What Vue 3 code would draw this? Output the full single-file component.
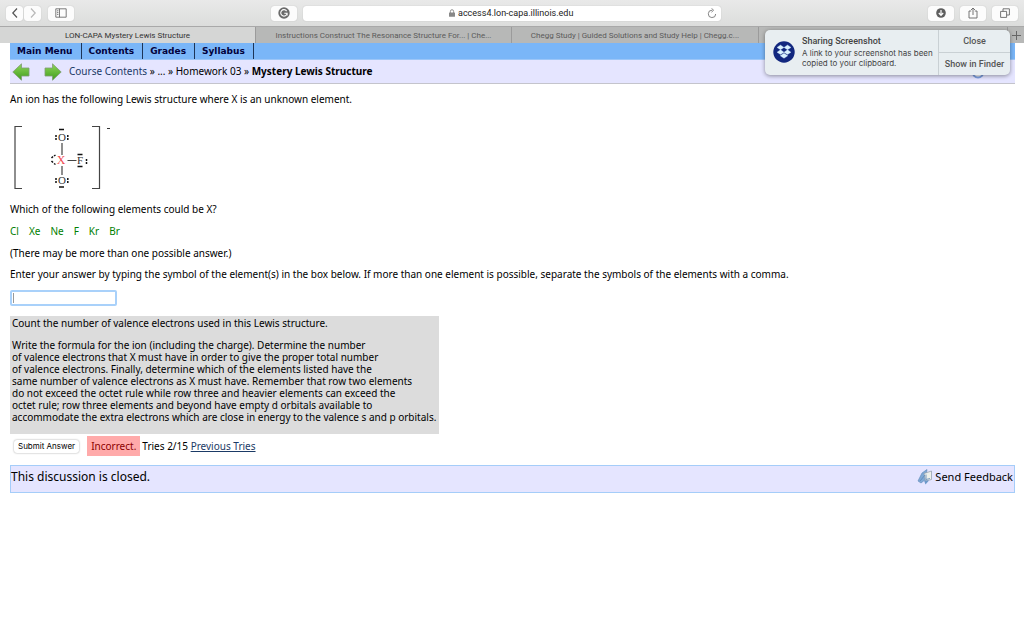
<template>
  <div class="browser">
    <header class="toolbar">
      <div class="side">
        <div class="pair">
          <button class="tool small" aria-label="Back">
            <svg width="8" height="12" viewBox="0 0 8 12"><path d="M6 1.5 1.8 6 6 10.5" fill="none" stroke="#555" stroke-width="1.2" /></svg>
          </button>
          <button class="tool small" aria-label="Forward">
            <svg width="8" height="12" viewBox="0 0 8 12"><path d="M2 1.5 6.2 6 2 10.5" fill="none" stroke="#b8b8b8" stroke-width="1.2" /></svg>
          </button>
        </div>
        <button class="tool" aria-label="Show sidebar">
          <svg width="12" height="10" viewBox="0 0 12 10">
            <path d="M.8.8h10.4v8.4H.8zM4.5.8v8.4M2 2.8h1.4M2 4.6h1.4M2 6.4h1.4" fill="none" stroke="#5c5c5c" stroke-width=".8" />
          </svg>
        </button>
      </div>
      <div class="center">
        <button class="tool" aria-label="Grammarly">
          <svg width="12" height="12" viewBox="0 0 12 12">
            <circle cx="6" cy="6" r="5.7" fill="#6b6b6b" />
            <path d="M8.6 4.1A3.2 3.2 0 1 0 9.1 6.3H6.3M9.1 6.3V8.4" fill="none" stroke="#fff" stroke-width="1.1" />
          </svg>
        </button>
        <div class="address">
          <svg class="lock" width="6" height="8" viewBox="0 0 6 8">
            <path d="M1.4 4V2.3a1.6 1.6 0 0 1 3.2 0V4" fill="none" stroke="#888" stroke-width=".9" />
            <rect y="3.6" width="6" height="4.2" rx=".5" fill="#888" />
          </svg>
          <input v-model="url" type="text" aria-label="Address" />
          <button class="reload" aria-label="Reload">
            <svg width="10" height="11" viewBox="0 0 10 11">
              <path d="M5.2 2.2A3.7 3.7 0 1 0 8.7 6M4.5.3 6.6 2.2 4.5 4.2" fill="none" stroke="#777" stroke-width=".9" />
            </svg>
          </button>
        </div>
      </div>
      <div class="side end">
        <button class="tool" aria-label="Downloads">
          <svg width="10" height="10" viewBox="0 0 10 10">
            <circle cx="5" cy="5" r="4.8" fill="#5e5e5e" />
            <path d="M5 2v5M2.8 5 5 7.4 7.2 5" fill="none" stroke="#fff" stroke-width="1.2" />
          </svg>
        </button>
        <button class="tool" aria-label="Share">
          <svg width="10" height="12" viewBox="0 0 10 12">
            <path d="M3.2 4H1v7h8V4H6.8M5 8V1M3 3l2-2 2 2" fill="none" stroke="#666" stroke-width=".9" />
          </svg>
        </button>
        <button class="tool" aria-label="Show all tabs">
          <svg width="10" height="10" viewBox="0 0 10 10">
            <path d="M.6 3.4h6v6h-6zM3 3.4V.8h6.4V7H6.6" fill="none" stroke="#666" stroke-width=".9" />
          </svg>
        </button>
      </div>
    </header>

    <nav class="tabs">
      <button v-for="(t, i) in tabs" :key="i" :class="['tab', 'tab-' + i, { active: i === activeTab }]" :aria-label="t || 'Tab'" @click="activeTab = i">
        {{ t }}
      </button>
      <button class="plus" aria-label="New tab">
        <svg width="9" height="9" viewBox="0 0 9 9"><path d="M4.5 0v9M0 4.5h9" stroke="#666" stroke-width="1" /></svg>
      </button>
    </nav>

    <div class="page">
      <nav class="menu">
        <a v-for="m in menu" :key="m" href="#">{{ m }}</a>
      </nav>

      <div class="crumbs">
        <a href="#" class="arrow" aria-label="Previous">
          <svg width="18" height="18" viewBox="0 0 18 18">
            <defs>
              <linearGradient id="green" x1="0" y1="0" x2="0" y2="1">
                <stop offset="0" stop-color="#8fd65a" />
                <stop offset="1" stop-color="#3f9c1c" />
              </linearGradient>
            </defs>
            <path d="M.8 9 9.5.8V5H17v8H9.5v4.2z" fill="url(#green)" stroke="#7f9c74" stroke-width=".8" />
          </svg>
        </a>
        <a href="#" class="arrow" aria-label="Next">
          <svg width="18" height="18" viewBox="0 0 18 18">
            <path d="M17.2 9 8.5.8V5H1v8h7.5v4.2z" fill="url(#green)" stroke="#7f9c74" stroke-width=".8" />
          </svg>
        </a>
        <div class="trail"><a href="#">Course Contents</a> » ... » Homework 03 » <b>Mystery Lewis Structure</b></div>
        <svg class="gear" width="14" height="14" viewBox="0 0 14 14"><circle cx="7" cy="7" r="5.5" fill="#fff" stroke="#7d9fe0" stroke-width="2" /></svg>
      </div>

      <main>
        <p>An ion has the following Lewis structure where X is an unknown element.</p>

        <svg class="lewis" width="104" height="78" viewBox="0 -1 104 78" role="img" aria-label="Lewis structure">
          <g fill="none" stroke="#444" stroke-width="1.2">
            <path d="M12 10.5H5V72.5H12M82 10.5h7.5V72.5H82" />
            <path d="M52 27V39M52 50V59M57.5 44.5H66.5" />
          </g>
          <g font-family="'Liberation Serif', serif" font-size="11" text-anchor="middle" fill="#333">
            <text x="52" y="25">O</text>
            <text x="52" y="68">O</text>
            <text x="70" y="48">F</text>
            <text x="51" y="48" font-size="12" fill="#f04a50">X</text>
          </g>
          <g fill="none" stroke="#111" stroke-width="1.5">
            <path d="M49 13.5h5M49 71h5M67.5 38.5h5M67.5 50.5h5" />
            <path d="M46 19v5M57.8 19v5M46 62v5M57.8 62v5M76.5 43v5" stroke-dasharray="2 1" />
            <path d="M41.5 42l1.500-1.500M44 40l1.500-1M41.500 45l1.500 1.500M44 47.500l1.500 1" />
          </g>
          <path d="M97 12.500h3" stroke="#333" />
        </svg>

        <p>Which of the following elements could be X?</p>
        <p class="elements"><span v-for="e in elements" :key="e">{{ e }}</span></p>
        <p class="note">(There may be more than one possible answer.)</p>
        <p>Enter your answer by typing the symbol of the element(s) in the box below. If more than one element is possible, separate the symbols of the elements with a comma.</p>

        <form @submit.prevent="submitAnswer">
          <div class="answer">
            <input ref="answerBox" v-model="answer" type="text" aria-label="Answer" />
            <span v-if="!answer" class="caret"></span>
          </div>

          <div class="hint">
            <p>Count the number of valence electrons used in this Lewis structure.</p>
            <p>
              Write the formula for the ion (including the charge). Determine the number<br />
              of valence electrons that X must have in order to give the proper total number<br />
              of valence electrons. Finally, determine which of the elements listed have the<br />
              same number of valence electrons as X must have. Remember that row two elements<br />
              do not exceed the octet rule while row three and heavier elements can exceed the<br />
              octet rule; row three elements and beyond have empty d orbitals available to<br />
              accommodate the extra electrons which are close in energy to the valence s and p orbitals.
            </p>
          </div>

          <div class="status">
            <button type="submit" class="submit">Submit Answer</button>
            <span class="incorrect">Incorrect.</span>
            <span>Tries {{ tries }}/15 <a href="#">Previous Tries</a></span>
          </div>
        </form>
      </main>

      <footer class="discussion">
        <span class="closed">This discussion is closed.</span>
        <a href="#" class="feedback">
          <svg width="16" height="16" viewBox="0 0 16 16">
            <path d="M1 12 5 4l5-3.500-1.500 10L4 14z" fill="#7fa9d6" stroke="#5d86b5" stroke-width=".6" />
            <path d="M7 4.500 14.500 2v8.500L8.500 12z" fill="#eef0ea" stroke="#8c9aa8" stroke-width=".7" />
            <path d="M9 5.500v5l4-1M3 12l5-6" fill="none" stroke="#5d86b5" stroke-width=".8" />
            <path d="M7 11.500h5L8.500 15.500z" fill="#6b98c9" />
          </svg>
          Send Feedback
        </a>
      </footer>
    </div>

    <aside v-if="showNotice" class="notice">
      <svg class="dropbox" width="22" height="22" viewBox="0 0 22 22">
        <circle cx="11" cy="11" r="10.700" fill="#12277f" />
        <path d="M7.500 4 11 6.400 7.500 8.800 4 6.400zM14.500 4 18 6.400 14.500 8.800 11 6.400zM7.500 8.800 11 11.200 7.500 13.600 4 11.200zM14.500 8.800 18 11.200 14.500 13.600 11 11.200zM11 12.300 14.800 14.800 11 17.300 7.200 14.800z" fill="#d9f1ff" stroke="#d9f1ff" stroke-width=".3" />
      </svg>
      <div class="message">
        <strong>Sharing Screenshot</strong>
        <span>A link to your screenshot has been<br />copied to your clipboard.</span>
      </div>
      <div class="actions">
        <button @click="showNotice = false">Close</button>
        <button>Show in Finder</button>
      </div>
    </aside>
  </div>
</template>

<script setup>
import { ref } from 'vue'

const url = ref('access4.lon-capa.illinois.edu')
const activeTab = ref(0)
const tabs = [
  'LON-CAPA Mystery Lewis Structure',
  'Instructions Construct The Resonance Structure For... | Che...',
  'Chegg Study | Guided Solutions and Study Help | Chegg.c...',
  ''
]
const menu = ['Main Menu', 'Contents', 'Grades', 'Syllabus']
const elements = ['Cl', 'Xe', 'Ne', 'F', 'Kr', 'Br']

const answer = ref('')
const answerBox = ref(null)
const tries = ref(2)
const showNotice = ref(true)

const submitAnswer = () => {
  if (!answer.value.trim()) {
    answerBox.value.focus()
    return
  }
  if (tries.value < 15) tries.value++
}
</script>

<style>
body { margin: 0; background: #fff; }
</style>

<style scoped>
* { box-sizing: border-box; }
.browser {
  position: relative;
  font-family: "Noto Sans", Verdana, sans-serif;
  font-size: 10px;
  line-height: 12px;
  color: #000;
}
button, input { font-family: inherit; margin: 0; padding: 0; border: none; }
svg { display: block; flex: none; }

.toolbar {
  display: flex;
  align-items: center;
  height: 27px;
  padding: 0 6px;
  background: linear-gradient(#e9e9e9, #dcdddc);
  border-bottom: 1px solid #a9a9a9;
  font-family: Roboto, sans-serif;
}
.side { display: flex; flex: 1; gap: 7px; }
.side.end { justify-content: flex-end; gap: 6px; }
.pair { display: flex; gap: 1px; }
.tool {
  display: flex;
  align-items: center;
  justify-content: center;
  width: 26px;
  height: 15px;
  border-radius: 3px;
  background: #fcfcfc;
  box-shadow: 0 0 1px #0004;
}
.tool.small { width: 17px; }
.center { display: flex; gap: 6px; width: 450px; margin-right: 32px; }
.address {
  display: flex;
  flex: 1;
  align-items: center;
  gap: 3px;
  height: 15px;
  padding: 0 4px 0 18px;
  border-radius: 3px;
  background: #fff;
  box-shadow: 0 0 1px #0004;
}
.lock { margin-left: auto; }
.address input { width: 118px; height: 15px; background: none; font-size: 9px; color: #222; outline: none; }
.reload { margin-left: auto; background: none; }

.tabs { display: flex; height: 16px; background: #b7b8b7; font-family: Roboto, sans-serif; }
.tab {
  min-width: 0;
  overflow: hidden;
  background: #b7b8b7;
  border-right: 1px solid #9b9b9b;
  color: #5b5b5b;
  font-size: 8px;
  white-space: nowrap;
}
.tab.active { background: #d5d6d5; color: #333; }
.tab-0, .tab-1 { flex: 256 1 0; }
.tab-2 { flex: 247 1 0; }
.tab-3 { flex: 249 1 0; }
.plus { display: flex; align-items: center; justify-content: center; width: 16px; background: none; }

.page { padding: 0 9px 0 10px; }
.menu { display: flex; height: 17px; background: #7ab6f8; border-bottom: 1px solid #9cc6f8; }
.menu a {
  padding: 0 8px 0 7px;
  border-right: 1px solid #1d3557;
  color: #02023c;
  font-family: "DejaVu Sans", Verdana, sans-serif;
  font-size: 9px;
  font-weight: bold;
  line-height: 16px;
  text-decoration: none;
}
.crumbs {
  display: flex;
  align-items: center;
  height: 24px;
  padding: 0 2px;
  background: #e5e5ff;
  border-bottom: 1px solid #c4c4cc;
}
.arrow { margin-right: 14px; }
.arrow + .arrow { margin-right: 7px; }
.trail { flex: 1; padding-bottom: 2px; }
.trail a { color: #1b3a66; text-decoration: none; }
.gear { margin-right: 28px; }

main { padding-top: 9px; }
p { margin: 0 0 10px; }
.lewis { margin-bottom: 10px; }
.elements { display: flex; gap: 10px; color: #008000; }
.note { margin-bottom: 9px; }
.answer { position: relative; width: 107px; height: 16px; margin-bottom: 10px; }
.answer input {
  display: block;
  width: 107px;
  height: 16px;
  padding: 0 4px;
  border: 2px solid #a9d1fa;
  border-radius: 2px;
  font-size: 10px;
  outline: none;
}
.caret { position: absolute; left: 3px; top: 3px; width: 1px; height: 10px; background: #999; }
.hint { width: fit-content; padding: 1px 3px 1px 2px; background: #dcdcdc; }
.status { display: flex; align-items: center; gap: 2px; height: 20px; margin: 2px 0 9px 4px; }
.submit {
  height: 13px;
  padding: 0 4px;
  margin-right: 6px;
  border-radius: 3px;
  background: #fff;
  box-shadow: 0 0 2px #0006;
  color: #000;
  font-family: Inter, sans-serif;
  font-size: 8px;
}
.incorrect { padding: 4px; background: #ffaaaa; color: #8b0000; }
.status a { color: #1b3a66; }

.discussion {
  display: flex;
  justify-content: space-between;
  height: 28px;
  padding: 3px 1px 3px 0;
  background: #e5e5ff;
  border: 1px solid #a5cdf9;
}
.closed { font-size: 12px; line-height: 16px; }
.feedback { display: flex; align-items: center; gap: 2px; height: 16px; color: #000; font-size: 11px; text-decoration: none; }

.notice {
  position: absolute;
  top: 30px;
  right: 14px;
  display: flex;
  width: 245px;
  height: 45px;
  border-radius: 5px;
  background: #e8eef1;
  box-shadow: 0 1px 4px #0006;
  color: #444;
  font-family: Inter, sans-serif;
  font-size: 8px;
  line-height: 10px;
}
.dropbox { margin: 11px 7px 0 8px; }
.message { display: flex; flex: 1; flex-direction: column; padding-top: 6px; white-space: nowrap; }
.message strong { margin-bottom: 2px; font-family: Roboto, sans-serif; font-size: 9px; font-weight: 500; }
.actions { display: flex; flex-direction: column; width: 72px; border-left: 1px solid #c9d0d4; }
.actions button { flex: 1; background: none; color: #555; font-family: Roboto, sans-serif; font-size: 9px; font-weight: 500; white-space: nowrap; }
.actions button + button { border-top: 1px solid #c9d0d4; }
</style>
